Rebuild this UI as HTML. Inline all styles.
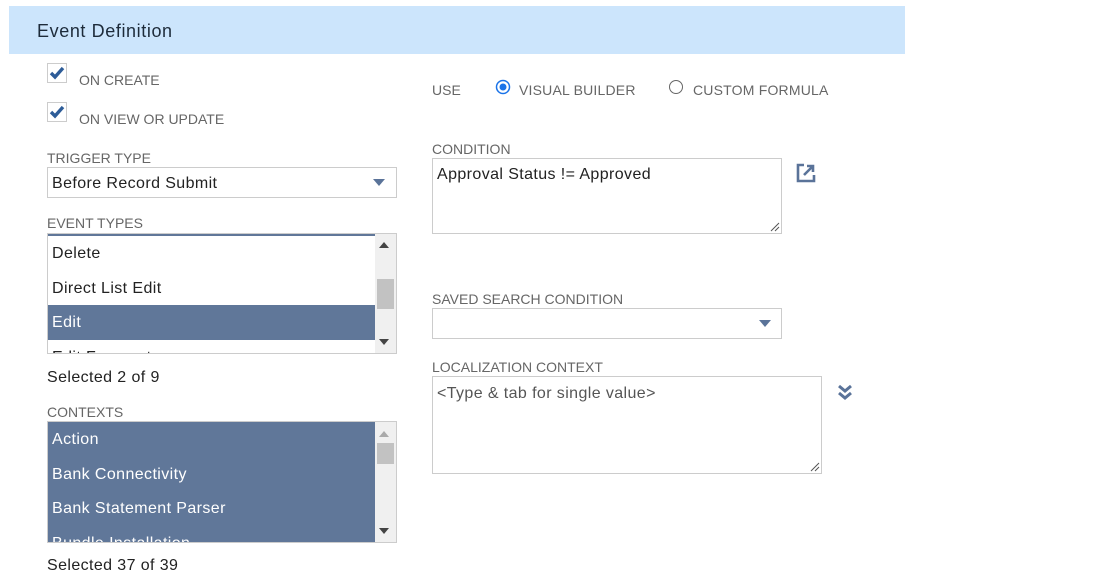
<!DOCTYPE html>
<html><head><meta charset="utf-8"><style>
*{margin:0;padding:0;box-sizing:border-box}
body{width:1099px;height:568px;background:#fff;font-family:"Liberation Sans",sans-serif;position:relative;overflow:hidden;color:#222}
.a{position:absolute}
.lbl{position:absolute;font-size:14px;color:#666;text-transform:uppercase;white-space:nowrap}
.txt{position:absolute;font-size:16px;color:#222;white-space:nowrap;letter-spacing:0.4px}
.box{position:absolute;border:1px solid #ccc;background:#fff}
.cb{position:absolute;width:20px;height:20px;border:1px solid #ccc;background:#fff}
.list{position:absolute;border:1px solid #ccc;overflow:hidden;background:#fff}
.row{height:34.5px;line-height:36px;padding-left:4px;font-size:16px;color:#222;width:327px;white-space:nowrap;letter-spacing:0.4px}
.sel{background:#607799;color:#fff}
.sb{position:absolute;right:0;top:0;width:21px;height:100%;background:#f0f0f0}
.tri{position:absolute;width:0;height:0;border-left:6px solid transparent;border-right:6px solid transparent}
</style></head><body>
<div class="a" style="left:9px;top:6px;width:896px;height:48px;background:#cce5fc"></div>
<div class="a" style="left:37px;top:21px;font-size:18px;color:#1d2b3a;letter-spacing:0.6px">Event Definition</div>

<div class="cb" style="left:47px;top:63px"><svg width="18" height="18" viewBox="0 0 18 18"><path d="M3 9 L7 13 L15 4" stroke="#2d5c98" stroke-width="3.4" fill="none"/></svg></div>
<div class="lbl" style="left:79px;top:72px">On Create</div>
<div class="cb" style="left:47px;top:102px"><svg width="18" height="18" viewBox="0 0 18 18"><path d="M3 9 L7 13 L15 4" stroke="#2d5c98" stroke-width="3.4" fill="none"/></svg></div>
<div class="lbl" style="left:79px;top:111px">On View or Update</div>

<div class="lbl" style="left:47px;top:150px">Trigger Type</div>
<div class="box" style="left:47px;top:167px;width:350px;height:31px"></div>
<div class="txt" style="left:52px;top:175px">Before Record Submit</div>
<div class="tri" style="left:373px;top:179px;border-top:7px solid #5a7399"></div>

<div class="lbl" style="left:47px;top:215px">Event Types</div>
<div class="list" style="left:47px;top:233px;width:350px;height:121px">
<div style="height:2px;background:#607799;width:327px"></div>
<div class="row">Delete</div>
<div class="row">Direct List Edit</div>
<div class="row sel">Edit</div>
<div class="row">Edit Forecast</div>
<div class="sb"><div class="tri" style="left:4px;top:8px;border-left-width:5px;border-right-width:5px;border-bottom:6px solid #444"></div>
<div class="a" style="left:2px;top:45px;width:17px;height:30px;background:#c2c2c2"></div>
<div class="tri" style="left:4px;top:105px;border-left-width:5px;border-right-width:5px;border-top:6px solid #444"></div></div>
</div>
<div class="txt" style="left:47px;top:369px">Selected 2 of 9</div>

<div class="lbl" style="left:47px;top:404px">Contexts</div>
<div class="list" style="left:47px;top:421px;width:350px;height:122px">
<div class="row sel">Action</div>
<div class="row sel">Bank Connectivity</div>
<div class="row sel">Bank Statement Parser</div>
<div class="row sel">Bundle Installation</div>
<div class="sb"><div class="tri" style="left:4px;top:9px;border-left-width:5px;border-right-width:5px;border-bottom:6px solid #aaa"></div>
<div class="a" style="left:2px;top:21px;width:17px;height:21px;background:#c2c2c2"></div>
<div class="tri" style="left:4px;top:106px;border-left-width:5px;border-right-width:5px;border-top:6px solid #444"></div></div>
</div>
<div class="txt" style="left:47px;top:557px">Selected 37 of 39</div>

<div class="lbl" style="left:432px;top:82px">Use</div>
<svg class="a" style="left:495px;top:79px" width="16" height="16"><circle cx="8" cy="8" r="6.5" fill="#fff" stroke="#1a73e8" stroke-width="1.5"/><circle cx="8" cy="8" r="3.5" fill="#1a73e8"/></svg>
<div class="lbl" style="left:519px;top:82px;letter-spacing:0.2px">Visual Builder</div>
<svg class="a" style="left:668px;top:79px" width="16" height="16"><circle cx="8" cy="8" r="6.5" fill="#fff" stroke="#666" stroke-width="1"/></svg>
<div class="lbl" style="left:693px;top:82px;letter-spacing:0.2px">Custom Formula</div>

<div class="lbl" style="left:432px;top:141px">Condition</div>
<div class="box" style="left:432px;top:158px;width:350px;height:76px"></div>
<div class="txt" style="left:437px;top:166px">Approval Status != Approved</div>
<svg class="a" style="left:770px;top:222px" width="10" height="10"><path d="M1 9 L9 1 M5 9 L9 5" stroke="#555" stroke-width="1"/></svg>
<svg class="a" style="left:795px;top:162px" width="22" height="22" viewBox="0 0 22 22"><path d="M9 3 H3 V19 H19 V13" stroke="#5a7399" stroke-width="2.6" fill="none"/><path d="M9 13 L17 5 M12 4 H18 V10" stroke="#5a7399" stroke-width="2.6" fill="none"/></svg>

<div class="lbl" style="left:432px;top:291px">Saved Search Condition</div>
<div class="box" style="left:432px;top:308px;width:350px;height:31px"></div>
<div class="tri" style="left:759px;top:320px;border-top:7px solid #5a7399"></div>

<div class="lbl" style="left:432px;top:359px">Localization Context</div>
<div class="box" style="left:432px;top:376px;width:390px;height:98px"></div>
<div class="txt" style="left:437px;top:385px;color:#555">&lt;Type &amp; tab for single value&gt;</div>
<svg class="a" style="left:810px;top:462px" width="10" height="10"><path d="M1 9 L9 1 M5 9 L9 5" stroke="#555" stroke-width="1"/></svg>
<svg class="a" style="left:837px;top:383px" width="16" height="18" viewBox="0 0 16 18"><path d="M2 3 L8 8 L14 3 M2 10 L8 15 L14 10" stroke="#5a7399" stroke-width="3" fill="none"/></svg>
</body></html>
